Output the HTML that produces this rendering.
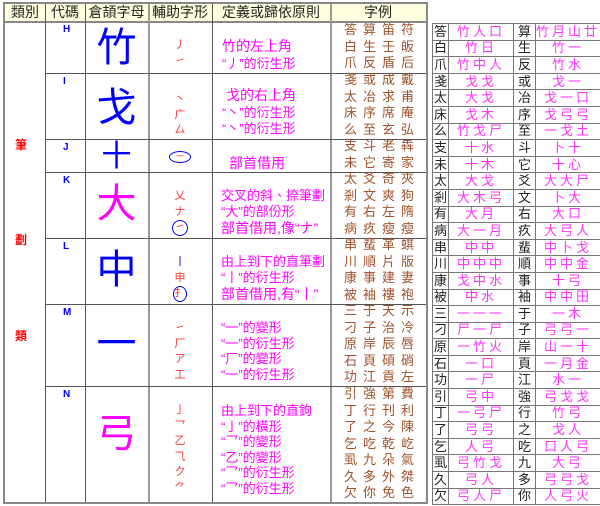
<!DOCTYPE html>
<html><head><meta charset="utf-8"><style>
*{margin:0;padding:0;box-sizing:border-box}
body{width:600px;height:506px;background:#fff;position:relative;overflow:hidden;font-family:"Liberation Sans","Noto Sans CJK TC",sans-serif}
.a{position:absolute;white-space:nowrap}
.h{position:absolute;height:1px;background:#555}
.v{position:absolute;width:1px;background:#555}
.hd{position:absolute;top:4px;height:17px;font-size:14px;line-height:17px;text-align:center;color:#222}
.ex{position:absolute;left:344px;font-size:13px;line-height:16.5px;letter-spacing:6px;color:#a0522d}
.df{position:absolute;font-size:13px;line-height:15.5px;color:#f0f}
.big{position:absolute;text-align:center;width:63px;left:85px;font-size:40px;line-height:44px;color:#00f}
.cd{position:absolute;left:63px;font-size:10px;font-weight:bold;color:#00f}
.sm{position:absolute;left:165px;width:30px;text-align:center;font-size:11px;line-height:15.5px;color:#f33}
.circ{display:inline-block;border:1.5px solid #00f;border-radius:50%;}
.cat{position:absolute;left:15px;font-size:12px;color:#f00;font-weight:bold}
table{position:absolute;left:432px;top:23px;border-collapse:collapse;width:168px;table-layout:fixed}
td{border:1px solid #777;height:16.6px;font-size:13px;line-height:14px;text-align:center;padding:0;color:#222;overflow:hidden;white-space:nowrap}
td.c{color:#f3f;letter-spacing:3px}
</style></head><body>
<div class="a" style="left:3px;top:2px;width:425px;height:502px;border:2px solid #888"></div>
<div class="a" style="left:5px;top:4px;width:421px;height:17px;background:#ffffe0"></div>
<div class="h" style="left:5px;top:21px;width:421px;background:#888;height:2px"></div>
<div class="v" style="left:45px;top:4px;height:498px"></div>
<div class="v" style="left:85px;top:4px;height:498px"></div>
<div class="v" style="left:148px;top:4px;height:498px;background:#999;width:2px"></div>
<div class="v" style="left:212px;top:4px;height:498px"></div>
<div class="v" style="left:330px;top:4px;height:498px;background:#999;width:2px"></div>
<div class="hd" style="left:5px;width:40px">類別</div>
<div class="hd" style="left:45px;width:40px">代碼</div>
<div class="hd" style="left:85px;width:63px">倉頡字母</div>
<div class="hd" style="left:148px;width:64px">輔助字形</div>
<div class="hd" style="left:212px;width:118px">定義或歸依原則</div>
<div class="hd" style="left:330px;width:96px">字例</div>
<div class="h" style="left:45px;top:73px;width:381px"></div>
<div class="h" style="left:45px;top:139px;width:381px"></div>
<div class="h" style="left:45px;top:172px;width:381px"></div>
<div class="h" style="left:45px;top:238px;width:381px"></div>
<div class="h" style="left:45px;top:304px;width:381px"></div>
<div class="h" style="left:45px;top:386px;width:381px"></div>
<div class="cat" style="top:136px">筆</div>
<div class="cat" style="top:231px">劃</div>
<div class="cat" style="top:327px">類</div>
<div class="cd" style="top:24px">H</div>
<div class="cd" style="top:76px">I</div>
<div class="cd" style="top:142px">J</div>
<div class="cd" style="top:175px">K</div>
<div class="cd" style="top:241px">L</div>
<div class="cd" style="top:307px">M</div>
<div class="cd" style="top:389px">N</div>
<div class="big" style="top:26px">竹</div>
<div class="big" style="top:86px">戈</div>
<div class="big" style="top:139px;font-size:30px;line-height:36px">十</div>
<div class="big" style="top:182px;color:#f0f">大</div>
<div class="big" style="top:248px">中</div>
<div class="big" style="top:322px">一</div>
<div class="big" style="top:412px;color:#f0f">弓</div>
<div class="sm" style="top:38px">丿<br>㇀</div>
<div class="sm" style="top:92px">丶<br>广<br>厶</div>
<div class="sm" style="top:149px"><span class="circ" style="width:22px;height:12px;font-size:8px;line-height:9px">⼀</span></div>
<div class="sm" style="top:189px">乂<br>ナ<br><span class="circ" style="width:16px;height:16px;line-height:13px">㇀</span></div>
<div class="sm" style="top:255px"><span style="color:#00f">丨</span><br>申<br><span class="circ" style="width:14px;height:16px;line-height:13px">⺘</span></div>
<div class="sm" style="top:321px">㇀<br>厂<br>ア<br>工</div>
<div class="sm" style="top:403px">亅<br>乛<br>乙<br>⺄<br>ク<br>⺈</div>
<div class="df" style="left:222px;top:39px;font-size:14px">竹的左上角</div>
<div class="df" style="left:222px;top:56px">“丿”的衍生形</div>
<div class="df" style="left:226px;top:88px;font-size:14px">戈的右上角</div>
<div class="df" style="left:222px;top:105px">“丶”的衍生形<br>“丶”的衍生形</div>
<div class="df" style="left:229px;top:156px;font-size:14px">部首借用</div>
<div class="df" style="left:221px;top:188px">交叉的斜、捺筆劃<br>“大”的部份形</div>
<div class="df" style="left:221px;top:221px;font-size:14px">部首借用,像“ナ”</div>
<div class="df" style="left:221px;top:254px">由上到下的直筆劃<br>“丨”的衍生形</div>
<div class="df" style="left:221px;top:287px;font-size:14px">部首借用,有“丨”</div>
<div class="df" style="left:221px;top:320px">“一”的變形<br>“一”的衍生形<br>“厂”的變形<br>“一”的衍生形</div>
<div class="df" style="left:221px;top:403px">由上到下的直鉤<br>“亅”的橫形<br>“乛”的變形<br>“乙”的變形<br>“乛”的衍生形<br>“乛”的衍生形</div>
<div class="ex" style="top:22px">答算笛符<br>白生壬皈<br>爪反盾后</div>
<div class="ex" style="top:72px">戔或成戴<br>太冶求甫<br>床序席庵<br>么至玄弘</div>
<div class="ex" style="top:138px">支斗老犇<br>未它寄家</div>
<div class="ex" style="top:171px">太爻奇夾<br>剎文爽狗<br>有右左隋<br>病疚瘦瘦</div>
<div class="ex" style="top:237px">串蜚革蜞<br>川順片版<br>康事建妻<br>被袖褸袍</div>
<div class="ex" style="top:303px">三于天示<br>刁子治冷<br>原岸辰唇<br>石頁碩硝<br>功江貢左</div>
<div class="ex" style="top:386px">引強第費<br>丁行刊利<br>了之今陳<br>乞吃乾屹<br>虱九朵氣<br>久多外桀<br>欠你免色</div>
<table>
<colgroup><col style="width:16px"><col style="width:65px"><col style="width:22px"><col style="width:65px"></colgroup>
<tr><td>答</td><td class="c">竹人口</td><td>算</td><td class="c">竹月山廿</td></tr>
<tr><td>白</td><td class="c">竹日</td><td>生</td><td class="c">竹一</td></tr>
<tr><td>爪</td><td class="c">竹中人</td><td>反</td><td class="c">竹水</td></tr>
<tr><td>戔</td><td class="c">戈戈</td><td>或</td><td class="c">戈一</td></tr>
<tr><td>太</td><td class="c">大戈</td><td>冶</td><td class="c">戈一口</td></tr>
<tr><td>床</td><td class="c">戈木</td><td>序</td><td class="c">戈弓弓</td></tr>
<tr><td>么</td><td class="c">竹戈尸</td><td>至</td><td class="c">一戈土</td></tr>
<tr><td>支</td><td class="c">十水</td><td>斗</td><td class="c">卜十</td></tr>
<tr><td>未</td><td class="c">十木</td><td>它</td><td class="c">十心</td></tr>
<tr><td>太</td><td class="c">大戈</td><td>爻</td><td class="c">大大尸</td></tr>
<tr><td>剎</td><td class="c">大木弓</td><td>文</td><td class="c">卜大</td></tr>
<tr><td>有</td><td class="c">大月</td><td>右</td><td class="c">大口</td></tr>
<tr><td>病</td><td class="c">大一月</td><td>疚</td><td class="c">大弓人</td></tr>
<tr><td>串</td><td class="c">中中</td><td>蜚</td><td class="c">中卜戈</td></tr>
<tr><td>川</td><td class="c">中中中</td><td>順</td><td class="c">中中金</td></tr>
<tr><td>康</td><td class="c">戈中水</td><td>事</td><td class="c">十弓</td></tr>
<tr><td>被</td><td class="c">中水</td><td>袖</td><td class="c">中中田</td></tr>
<tr><td>三</td><td class="c">一一一</td><td>于</td><td class="c">一木</td></tr>
<tr><td>刁</td><td class="c">尸一尸</td><td>子</td><td class="c">弓弓一</td></tr>
<tr><td>原</td><td class="c">一竹火</td><td>岸</td><td class="c">山一十</td></tr>
<tr><td>石</td><td class="c">一口</td><td>頁</td><td class="c">一月金</td></tr>
<tr><td>功</td><td class="c">一尸</td><td>江</td><td class="c">水一</td></tr>
<tr><td>引</td><td class="c">弓中</td><td>強</td><td class="c">弓戈戈</td></tr>
<tr><td>丁</td><td class="c">一弓尸</td><td>行</td><td class="c">竹弓</td></tr>
<tr><td>了</td><td class="c">弓弓</td><td>之</td><td class="c">戈人</td></tr>
<tr><td>乞</td><td class="c">人弓</td><td>吃</td><td class="c">口人弓</td></tr>
<tr><td>虱</td><td class="c">弓竹戈</td><td>九</td><td class="c">大弓</td></tr>
<tr><td>久</td><td class="c">弓人</td><td>多</td><td class="c">弓弓戈</td></tr>
<tr><td>欠</td><td class="c">弓人尸</td><td>你</td><td class="c">人弓火</td></tr>
</table>
</body></html>
